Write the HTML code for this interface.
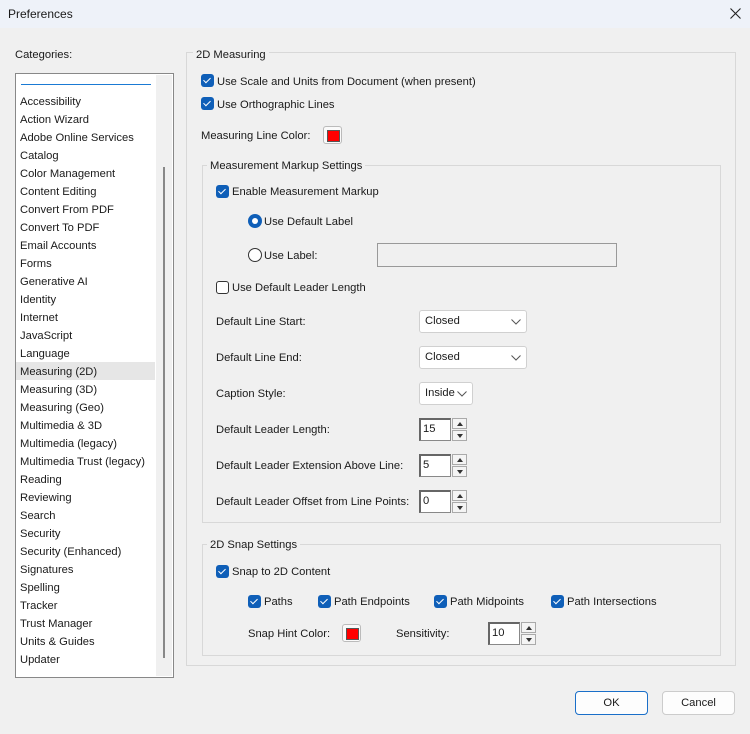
<!DOCTYPE html>
<html><head><style>
*{margin:0;padding:0;box-sizing:border-box}
body{width:750px;height:734px;background:#f0f0f0;font-family:"Liberation Sans",sans-serif;font-size:11.2px;color:#1a1a1a;position:relative;overflow:hidden}
.a{position:absolute;white-space:nowrap;line-height:14px;margin-top:1px}
.grp{position:absolute;border:1px solid #d8d8d8}
.lg{position:absolute;background:#f0f0f0;padding:0 3px;line-height:14px;margin-top:1px}
.cb{position:absolute;width:13px;height:13px;border-radius:3px;background:#0f5fb8}
.cb:after{content:"";position:absolute;left:4px;top:2px;width:3px;height:6px;border:solid #fff;border-width:0 1.3px 1.3px 0;transform:rotate(45deg)}
.cbo{position:absolute;width:13px;height:13px;border-radius:3px;border:1px solid #333;background:#fff}
.sw{position:absolute;width:19px;height:18px;border:1px solid #bbb;border-radius:3px;background:#fafafa}
.sw:after{content:"";position:absolute;left:3px;top:3px;width:11px;height:10px;background:#f00;border:1px solid #555}
.dd{position:absolute;height:23px;background:#fff;border:1px solid #d0d0d0;border-radius:3px;padding-left:5px;line-height:21px}
.dd svg{position:absolute;right:5px;top:8px}
.sp{position:absolute;width:32px;height:23px;background:#fff;border:1px solid #888;border-left:2px solid #666;border-top:2px solid #666;padding-left:2px;line-height:19px}
.ar{position:absolute;width:15px;height:23px}
.ar div{height:11px;border:1px solid #aaa;background:#f4f4f4;margin-bottom:1px;position:relative}
.ar div:after{content:"";position:absolute;left:4px;border-left:3px solid transparent;border-right:3px solid transparent}
.u:after{top:3px;border-bottom:4px solid #333}
.d:after{top:3px;border-top:4px solid #333}
.btn{position:absolute;width:73px;height:24px;border:1px solid #ccc;border-radius:4px;background:#fdfdfd;text-align:center;line-height:22px}
</style></head><body>
<div style="position:absolute;left:0;top:0;width:750px;height:28px;background:#eef2f9"></div>
<div class="a" style="left:8px;top:6px;font-size:12px">Preferences</div>
<svg style="position:absolute;left:730px;top:8px" width="11" height="11"><path d="M0.5 0.5L10.5 10.5M10.5 0.5L0.5 10.5" stroke="#222" stroke-width="1.1"/></svg>

<div class="a" style="left:15px;top:47px">Categories:</div>
<div style="position:absolute;left:15px;top:73px;width:159px;height:605px;border:1px solid #888;background:#fff"></div>
<div style="position:absolute;left:156px;top:75px;width:16px;height:601px;background:#f0f0f0"></div>
<div style="position:absolute;left:163px;top:167px;width:2px;height:491px;background:#888"></div>
<div style="position:absolute;left:21px;top:84px;width:130px;height:1px;background:#1a7ad4"></div>
<div style="position:absolute;left:16px;top:362px;width:139px;height:18px;background:#e6e6e6"></div>
<div id="list"></div>

<div class="grp" style="left:186px;top:52px;width:550px;height:614px"></div>
<div class="lg" style="left:193px;top:47px">2D Measuring</div>
<div class="cb" style="left:201px;top:74px"></div><div class="a" style="left:217px;top:74px">Use Scale and Units from Document (when present)</div>
<div class="cb" style="left:201px;top:97px"></div><div class="a" style="left:217px;top:97px">Use Orthographic Lines</div>
<div class="a" style="left:201px;top:128px">Measuring Line Color:</div>
<div class="sw" style="left:323px;top:126px"></div>

<div class="grp" style="left:202px;top:165px;width:519px;height:358px"></div>
<div class="lg" style="left:207px;top:158px">Measurement Markup Settings</div>
<div class="cb" style="left:216px;top:185px"></div><div class="a" style="left:232px;top:184px">Enable Measurement Markup</div>
<div style="position:absolute;left:248px;top:214px;width:14px;height:14px;border-radius:50%;background:#0f5fb8"><div style="position:absolute;left:4px;top:4px;width:6px;height:6px;border-radius:50%;background:#fff"></div></div>
<div class="a" style="left:264px;top:214px">Use Default Label</div>
<div style="position:absolute;left:248px;top:248px;width:14px;height:14px;border-radius:50%;border:1px solid #333;background:#fff"></div>
<div class="a" style="left:264px;top:248px">Use Label:</div>
<div style="position:absolute;left:377px;top:243px;width:240px;height:24px;border:1px solid #999;background:#f0f0f0"></div>
<div class="cbo" style="left:216px;top:281px"></div><div class="a" style="left:232px;top:280px">Use Default Leader Length</div>
<div class="a" style="left:216px;top:314px">Default Line Start:</div>
<div class="a" style="left:216px;top:350px">Default Line End:</div>
<div class="a" style="left:216px;top:386px">Caption Style:</div>
<div class="a" style="left:216px;top:422px">Default Leader Length:</div>
<div class="a" style="left:216px;top:458px">Default Leader Extension Above Line:</div>
<div class="a" style="left:216px;top:494px">Default Leader Offset from Line Points:</div>
<div class="dd" style="left:419px;top:310px;width:108px">Closed<svg width="10" height="6"><path d="M0.5 0.5L5 5L9.5 0.5" stroke="#555" fill="none"/></svg></div>
<div class="dd" style="left:419px;top:346px;width:108px">Closed<svg width="10" height="6"><path d="M0.5 0.5L5 5L9.5 0.5" stroke="#555" fill="none"/></svg></div>
<div class="dd" style="left:419px;top:382px;width:54px">Inside<svg width="10" height="6"><path d="M0.5 0.5L5 5L9.5 0.5" stroke="#555" fill="none"/></svg></div>
<div class="sp" style="left:419px;top:418px">15</div><div class="ar" style="left:452px;top:418px"><div class="u"></div><div class="d"></div></div>
<div class="sp" style="left:419px;top:454px">5</div><div class="ar" style="left:452px;top:454px"><div class="u"></div><div class="d"></div></div>
<div class="sp" style="left:419px;top:490px">0</div><div class="ar" style="left:452px;top:490px"><div class="u"></div><div class="d"></div></div>

<div class="grp" style="left:202px;top:544px;width:519px;height:112px"></div>
<div class="lg" style="left:207px;top:537px">2D Snap Settings</div>
<div class="cb" style="left:216px;top:565px"></div><div class="a" style="left:232px;top:564px">Snap to 2D Content</div>
<div class="cb" style="left:248px;top:595px"></div><div class="a" style="left:264px;top:594px">Paths</div>
<div class="cb" style="left:318px;top:595px"></div><div class="a" style="left:334px;top:594px">Path Endpoints</div>
<div class="cb" style="left:434px;top:595px"></div><div class="a" style="left:450px;top:594px">Path Midpoints</div>
<div class="cb" style="left:551px;top:595px"></div><div class="a" style="left:567px;top:594px">Path Intersections</div>
<div class="a" style="left:248px;top:626px">Snap Hint Color:</div>
<div class="sw" style="left:342px;top:624px"></div>
<div class="a" style="left:396px;top:626px">Sensitivity:</div>
<div class="sp" style="left:488px;top:622px">10</div><div class="ar" style="left:521px;top:622px"><div class="u"></div><div class="d"></div></div>

<div class="btn" style="left:575px;top:691px;border:1px solid #1a6fc9">OK</div>
<div class="btn" style="left:662px;top:691px">Cancel</div>

<script>
var n=["Accessibility","Action Wizard","Adobe Online Services","Catalog","Color Management","Content Editing","Convert From PDF","Convert To PDF","Email Accounts","Forms","Generative AI","Identity","Internet","JavaScript","Language","Measuring (2D)","Measuring (3D)","Measuring (Geo)","Multimedia &amp; 3D","Multimedia (legacy)","Multimedia Trust (legacy)","Reading","Reviewing","Search","Security","Security (Enhanced)","Signatures","Spelling","Tracker","Trust Manager","Units &amp; Guides","Updater"];
var h="";n.forEach(function(s,i){h+='<div class="a" style="left:20px;top:'+(94+i*18)+'px">'+s+'</div>'});
document.getElementById("list").innerHTML=h;
</script>
</body></html>
